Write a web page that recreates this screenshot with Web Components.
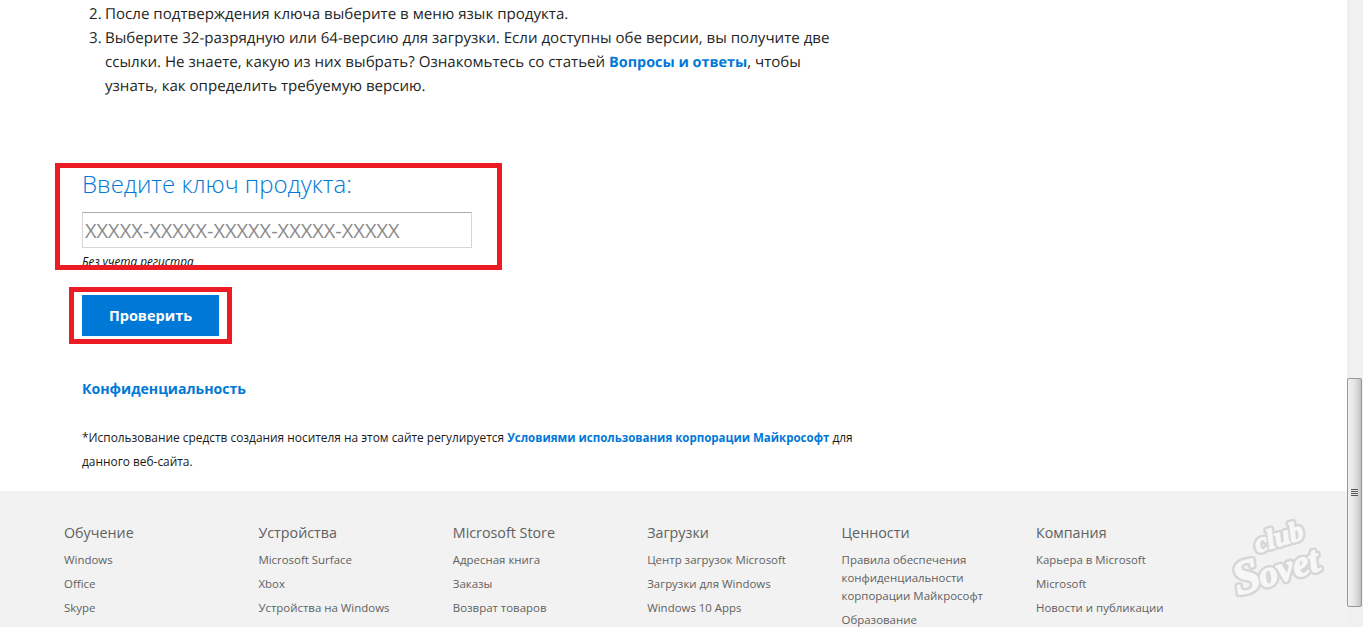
<!DOCTYPE html>
<html lang="ru">
<head>
<meta charset="utf-8">
<title>Введите ключ продукта</title>
<style>
  html, body { margin: 0; height: 627px; overflow: hidden; background: #fff; }
  body { font-family: "Open Sans", "Noto Sans", sans-serif; color: #1a1a1a; display: flex; }
</style>
</head>
<body>
<page-shell>
  <step-item number="2.">После подтверждения ключа выберите в меню язык продукта.</step-item>
  <step-item number="3.">Выберите 32-разрядную или 64-версию для загрузки. Если доступны обе версии, вы получите две ссылки. Не знаете, какую из них выбрать? Ознакомьтесь со статьей <ms-link>Вопросы и ответы</ms-link>, чтобы узнать, как определить требуемую версию.</step-item>
  <key-form slot="form"></key-form>
  <legal-note slot="legal"></legal-note>
  <site-footer slot="footer">
    <footer-col title="Обучение"><footer-item>Windows</footer-item><footer-item>Office</footer-item><footer-item>Skype</footer-item></footer-col>
    <footer-col title="Устройства"><footer-item>Microsoft Surface</footer-item><footer-item>Xbox</footer-item><footer-item>Устройства на Windows</footer-item></footer-col>
    <footer-col title="Microsoft Store"><footer-item>Адресная книга</footer-item><footer-item>Заказы</footer-item><footer-item>Возврат товаров</footer-item></footer-col>
    <footer-col title="Загрузки"><footer-item>Центр загрузок Microsoft</footer-item><footer-item>Загрузки для Windows</footer-item><footer-item>Windows 10 Apps</footer-item></footer-col>
    <footer-col title="Ценности"><footer-item>Правила обеспечения конфиденциальности корпорации Майкрософт</footer-item><footer-item>Образование</footer-item></footer-col>
    <footer-col title="Компания"><footer-item>Карьера в Microsoft</footer-item><footer-item>Microsoft</footer-item><footer-item>Новости и публикации</footer-item></footer-col>
  </site-footer>
</page-shell>
<page-scrollbar></page-scrollbar>

<script>
class PageShell extends HTMLElement {
  constructor() {
    super();
    this.attachShadow({ mode: 'open' }).innerHTML = `
      <style>
        :host { display: flex; flex-direction: column; width: 1347px; height: 627px; overflow: hidden; position: relative; }
        .steps { padding: 2px 0 0 89px; width: 744px; }
        .form { margin-top: 70px; padding-left: 82px; }
        .footer { margin-top: auto; }
      </style>
      <div class="steps"><slot></slot></div>
      <div class="form"><slot name="form"></slot></div>
      <slot name="legal"></slot>
      <div class="footer"><slot name="footer"></slot></div>
      <club-mark></club-mark>`;
  }
}

class StepItem extends HTMLElement {
  constructor() {
    super();
    this.attachShadow({ mode: 'open' }).innerHTML = `
      <style>
        :host { display: grid; grid-template-columns: 16px 1fr; font-size: 15.1px; text-rendering: geometricPrecision; line-height: 24px; color: #1f1f1f; }
      </style>
      <span id="n"></span><div><slot></slot></div>`;
  }
  connectedCallback() {
    this.shadowRoot.getElementById('n').textContent = this.getAttribute('number');
  }
}

class MsLink extends HTMLElement {
  constructor() {
    super();
    this.attachShadow({ mode: 'open' }).innerHTML = `
      <style>:host { color: #0078d7; font-weight: 700; font-size: 14.4px; line-height: 0; }</style><slot></slot>`;
  }
}

class KeyForm extends HTMLElement {
  constructor() {
    super();
    this.attachShadow({ mode: 'open' }).innerHTML = `
      <style>
        :host { display: block; position: relative; height: 168px; }
        h2 { margin: 0; font-size: 24px; line-height: 32px; font-weight: 300; color: #0078d7; }
        .field { box-sizing: border-box; width: 390px; height: 36px; margin-top: 12px; border: 1px solid #d6d6d6; border-top-color: #ababab; border-radius: 1px; padding-left: 2px; font-size: 20px; line-height: 36px; color: #8c8c8c; white-space: nowrap; }
        .hint { margin-top: 6px; height: 12px; font-size: 11.7px; line-height: 15px; font-style: italic; color: #111; }
        button { display: block; margin-top: 29px; width: 137px; height: 41px; border: 0; padding: 0; background: #0078d7; color: #fff; font: 700 14.5px "Open Sans", sans-serif; }
        .frame { position: absolute; box-sizing: border-box; border: 5px solid #ed1c24; pointer-events: none; }
        .f1 { left: -27px; top: -5px; width: 447px; height: 107px; }
        .f2 { left: -13px; top: 119px; width: 163px; height: 57px; }
      </style>
      <h2>Введите ключ продукта:</h2>
      <div class="field">XXXXX-XXXXX-XXXXX-XXXXX-XXXXX</div>
      <div class="hint">Без учета регистра</div>
      <button>Проверить</button>
      <div class="frame f1"></div>
      <div class="frame f2"></div>`;
  }
}

class LegalNote extends HTMLElement {
  constructor() {
    super();
    this.attachShadow({ mode: 'open' }).innerHTML = `
      <style>
        :host { display: block; padding-left: 82px; width: 775px; }
        .privacy { display: block; margin-top: 43px; font-size: 14.1px; line-height: 20px; font-weight: 700; color: #0078d7; }
        p { margin: 26px 0 0; font-size: 11.9px; line-height: 24px; color: #1a1a1a; }
        b { color: #0078d7; font-size: 11.5px; line-height: 0; }
      </style>
      <span class="privacy">Конфиденциальность</span>
      <p>*Использование средств создания носителя на этом сайте регулируется <b>Условиями использования корпорации Майкрософт</b> для данного веб-сайта.</p>`;
  }
}

class SiteFooter extends HTMLElement {
  constructor() {
    super();
    this.attachShadow({ mode: 'open' }).innerHTML = `
      <style>
        :host { display: grid; grid-template-columns: repeat(6, 194.4px); height: 136px; box-sizing: border-box; padding: 32px 0 0 64px; background: #f2f2f2; overflow: hidden; }
      </style>
      <slot></slot>`;
  }
}

class FooterCol extends HTMLElement {
  constructor() {
    super();
    this.attachShadow({ mode: 'open' }).innerHTML = `
      <style>
        :host { display: block; width: 160px; }
        h3 { margin: 0 0 8px; font-size: 14.3px; line-height: 20px; font-weight: 400; color: #616161; }
      </style>
      <h3></h3><slot></slot>`;
  }
  connectedCallback() {
    this.shadowRoot.querySelector('h3').textContent = this.getAttribute('title');
    this.removeAttribute('title');
  }
}

class FooterItem extends HTMLElement {
  constructor() {
    super();
    this.attachShadow({ mode: 'open' }).innerHTML = `
      <style>:host { display: block; margin-bottom: 6px; font-size: 11.45px; line-height: 18px; color: #616161; }</style><slot></slot>`;
  }
}

class ClubMark extends HTMLElement {
  constructor() {
    super();
    this.attachShadow({ mode: 'open' }).innerHTML = `
      <style>
        :host { position: absolute; left: 1220px; top: 510px; width: 125px; height: 95px; }
        svg { overflow: visible; display: block; }
        text { font-family: "Liberation Serif", serif; font-style: italic; font-weight: 700; }
        .outer { fill: #d6d6d6; stroke: #d6d6d6; stroke-width: 6px; stroke-linejoin: round; stroke-linecap: round; }
        .inner { fill: #f7f7f7; stroke: #f7f7f7; stroke-width: 1.2px; stroke-linejoin: round; }
      </style>
      <svg width="125" height="95" viewBox="0 0 125 95">
        <g transform="rotate(-17 62 48)">
          <g class="outer">
            <text id="club" x="40" y="36" font-size="28">club</text>
            <text id="sovet" x="9" y="71"><tspan font-size="48">S</tspan><tspan font-size="37" dx="-1">ovet</tspan></text>
          </g>
          <use class="inner" href="#club"></use>
          <use class="inner" href="#sovet"></use>
        </g>
      </svg>`;
  }
}

class PageScrollbar extends HTMLElement {
  constructor() {
    super();
    this.attachShadow({ mode: 'open' }).innerHTML = `
      <style>
        :host { display: block; flex: none; width: 16px; height: 627px; background: #f0f0f0; box-sizing: border-box; padding-top: 378px; }
        .thumb { box-sizing: border-box; width: 15px; height: 229px; border: 1px solid #979797; border-radius: 2px; background: linear-gradient(90deg, #f1f1f1, #e6e6e6 45%, #cfcfcf 85%, #bdbdbd); display: flex; align-items: center; justify-content: center; }
        .grip { width: 7px; height: 7px; background: repeating-linear-gradient(#555 0 1px, #e8e8e8 1px 2px); }
      </style>
      <div class="thumb"><div class="grip"></div></div>`;
  }
}

customElements.define('page-shell', PageShell);
customElements.define('step-item', StepItem);
customElements.define('ms-link', MsLink);
customElements.define('key-form', KeyForm);
customElements.define('legal-note', LegalNote);
customElements.define('site-footer', SiteFooter);
customElements.define('footer-col', FooterCol);
customElements.define('footer-item', FooterItem);
customElements.define('club-mark', ClubMark);
customElements.define('page-scrollbar', PageScrollbar);
</script>
</body>
</html>
